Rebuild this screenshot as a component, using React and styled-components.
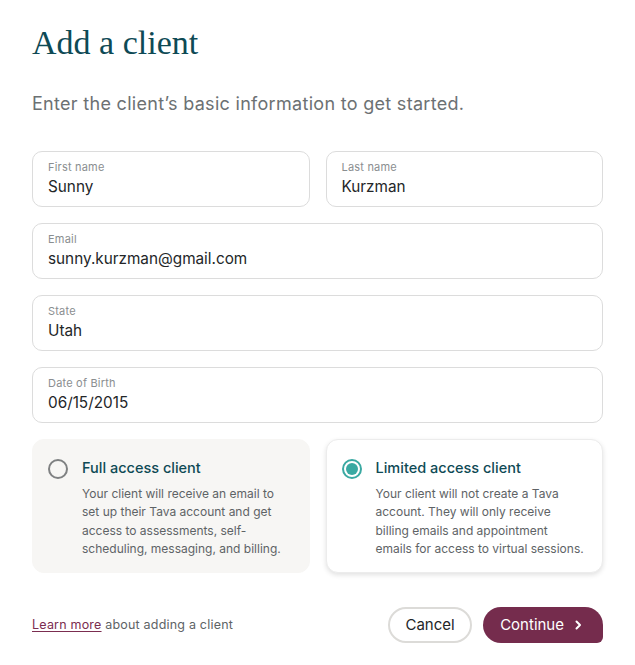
import React from 'react'
import styled, { createGlobalStyle } from 'styled-components'

const Global = createGlobalStyle`
  body {
    margin: 0;
    background: #fff;
    font-family: 'Inter', 'Noto Sans', sans-serif;
  }
`;

const Page = styled.div`
  width: 635px;
  box-sizing: border-box;
  padding: 21px 32px 24px;
`;

const Title = styled.h1`
  margin: 0;
  font-family: 'Liberation Serif', serif;
  font-weight: 400;
  font-size: 34px;
  line-height: 44px;
  color: #0e4a55;
`;

const Subtitle = styled.p`
  margin: 27px 0 35px;
  font-size: 18px;
  line-height: 24px;
  letter-spacing: 0.3px;
  color: #6c7173;
`;

const Form = styled.div`
  display: flex;
  flex-direction: column;
  gap: 16px;
`;

const Row = styled.div`
  display: grid;
  grid-template-columns: 1fr 1fr;
  gap: 16px;
`;

const Field = styled.div`
  height: 56px;
  box-sizing: border-box;
  border: 1px solid #dcdcdc;
  border-radius: 10px;
  padding: 8px 15px 0;
  display: flex;
  flex-direction: column;
  gap: 3px;
`;

const Label = styled.span`
  font-size: 11px;
  line-height: 14px;
  letter-spacing: 0.2px;
  color: #8a8e90;
`;

const Value = styled.span`
  font-size: 15.3px;
  line-height: 20px;
  color: #232628;
`;

const Options = styled.div`
  display: grid;
  grid-template-columns: 1fr 1fr;
  gap: 16px;
  margin-top: 16px;
`;

const Option = styled.div`
  display: flex;
  gap: 14px;
  padding: 18px 10px 13px 15px;
  border-radius: 12px;
  background: ${p => (p.$selected ? '#fff' : '#f7f6f4')};
  border: 1px solid ${p => (p.$selected ? '#ececec' : '#f7f6f4')};
  box-shadow: ${p => (p.$selected ? '0 2px 5px rgba(0,0,0,0.12)' : 'none')};
`;

const Radio = styled.span`
  flex: none;
  width: 20px;
  height: 20px;
  box-sizing: border-box;
  border-radius: 50%;
  margin-top: 1px;
  border: 2px solid ${p => (p.$checked ? '#3aa9a2' : '#7f8182')};
  display: flex;
  align-items: center;
  justify-content: center;
  &::after {
    content: '';
    width: 12px;
    height: 12px;
    border-radius: 50%;
    background: ${p => (p.$checked ? '#3aa9a2' : 'transparent')};
  }
`;

const OptionBody = styled.div`
  display: flex;
  flex-direction: column;
  gap: 7px;
`;

const OptionTitle = styled.span`
  font-size: 14.5px;
  line-height: 20px;
  font-weight: 500;
  color: #0e4a55;
`;

const OptionText = styled.div`
  font-size: 12px;
  line-height: 18.4px;
  color: #5e6366;
`;

const TextLine = styled.span`
  display: block;
  white-space: nowrap;
`;

const Footer = styled.div`
  display: flex;
  align-items: center;
  justify-content: space-between;
  margin-top: 34px;
`;

const Note = styled.span`
  font-size: 12.5px;
  letter-spacing: 0.2px;
  color: #5e6366;
`;

const Link = styled.a`
  color: #7b2d50;
  text-decoration: underline;
  text-underline-offset: 2px;
`;

const Actions = styled.div`
  display: flex;
  gap: 11px;
`;

const Button = styled.button`
  height: 36px;
  box-sizing: border-box;
  font-family: inherit;
  font-size: 15px;
  display: flex;
  align-items: center;
  gap: 9px;
  cursor: pointer;
  border-radius: ${p => (p.$primary ? '18px 18px 6px 18px' : '18px')};
  padding: ${p => (p.$primary ? '0 20px 0 17px' : '0 15.5px')};
  border: ${p => (p.$primary ? 'none' : '2px solid #dcdbd8')};
  background: ${p => (p.$primary ? '#752c4d' : '#fff')};
  color: ${p => (p.$primary ? '#fff' : '#232628')};
`;

const fields = [
  [
    { label: 'First name', value: 'Sunny' },
    { label: 'Last name', value: 'Kurzman' },
  ],
  [{ label: 'Email', value: 'sunny.kurzman@gmail.com' }],
  [{ label: 'State', value: 'Utah' }],
  [{ label: 'Date of Birth', value: '06/15/2015' }],
];

const options = [
  {
    title: 'Full access client',
    lines: [
      'Your client will receive an email to',
      'set up their Tava account and get',
      'access to assessments, self-',
      'scheduling, messaging, and billing.',
    ],
    selected: false,
  },
  {
    title: 'Limited access client',
    lines: [
      'Your client will not create a Tava',
      'account. They will only receive',
      'billing emails and appointment',
      'emails for access to virtual sessions.',
    ],
    selected: true,
  },
];

function App() {
  return (
    <Page>
      <Global />
      <Title>Add a client</Title>
      <Subtitle>Enter the client’s basic information to get started.</Subtitle>
      <Form>
        {fields.map((row, i) =>
          row.length > 1 ? (
            <Row key={i}>
              {row.map(f => (
                <Field key={f.label}>
                  <Label>{f.label}</Label>
                  <Value>{f.value}</Value>
                </Field>
              ))}
            </Row>
          ) : (
            <Field key={i}>
              <Label>{row[0].label}</Label>
              <Value>{row[0].value}</Value>
            </Field>
          )
        )}
      </Form>
      <Options>
        {options.map(o => (
          <Option key={o.title} $selected={o.selected}>
            <Radio $checked={o.selected} />
            <OptionBody>
              <OptionTitle>{o.title}</OptionTitle>
              <OptionText>
                {o.lines.map(l => (
                  <TextLine key={l}>{l}</TextLine>
                ))}
              </OptionText>
            </OptionBody>
          </Option>
        ))}
      </Options>
      <Footer>
        <Note>
          <Link>Learn more</Link> about adding a client
        </Note>
        <Actions>
          <Button>Cancel</Button>
          <Button $primary>
            Continue
            <svg width="10" height="10" viewBox="0 0 10 10" fill="none">
              <path d="M3.5 1.5L7 5L3.5 8.5" stroke="#fff" strokeWidth="2" strokeLinecap="round" strokeLinejoin="round" />
            </svg>
          </Button>
        </Actions>
      </Footer>
    </Page>
  )
}

export default App
